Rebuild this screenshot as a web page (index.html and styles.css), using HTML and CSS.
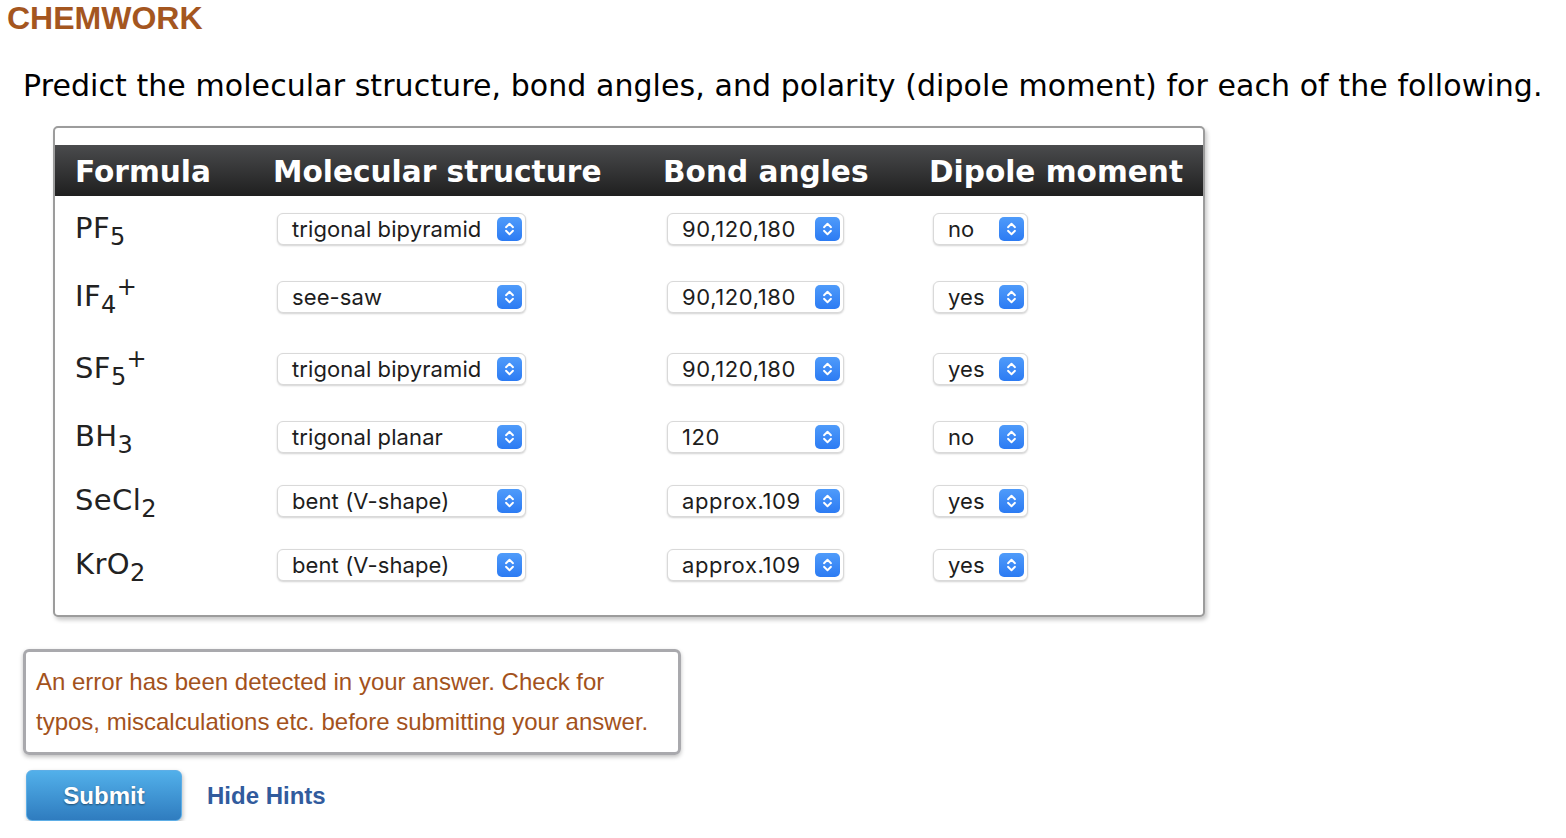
FILE: index.html
```html
<!DOCTYPE html>
<html>
<head>
<meta charset="utf-8">
<title>CHEMWORK</title>
<link rel="stylesheet" href="styles.css">
</head>
<body>
<div class="page">
  <h1 class="brand">CHEMWORK</h1>
  <p class="question">Predict the molecular structure, bond angles, and polarity (dipole moment) for each of the following.</p>

  <div class="panel">
    <div class="grid head">
      <div class="th first">Formula</div>
      <div class="th">Molecular structure</div>
      <div class="th">Bond angles</div>
      <div class="th">Dipole moment</div>
    </div>
    <div class="body">
      <div class="grid row">
        <div class="formula">PF<sub>5</sub></div>
        <div class="cell"><div class="select w-struct"><span class="val">trigonal bipyramid</span><span class="arrows"><svg viewBox="0 0 25 24" width="25" height="24"><path d="M9 10.2 L12.5 6.8 L16 10.2 M9 13.8 L12.5 17.2 L16 13.8"/></svg></span></div></div>
        <div class="cell"><div class="select w-angle"><span class="val num">90,120,180</span><span class="arrows"><svg viewBox="0 0 25 24" width="25" height="24"><path d="M9 10.2 L12.5 6.8 L16 10.2 M9 13.8 L12.5 17.2 L16 13.8"/></svg></span></div></div>
        <div class="cell"><div class="select w-dip"><span class="val">no</span><span class="arrows"><svg viewBox="0 0 25 24" width="25" height="24"><path d="M9 10.2 L12.5 6.8 L16 10.2 M9 13.8 L12.5 17.2 L16 13.8"/></svg></span></div></div>
      </div>
      <div class="grid row tall">
        <div class="formula">IF<sub>4</sub><sup>+</sup></div>
        <div class="cell"><div class="select w-struct"><span class="val">see-saw</span><span class="arrows"><svg viewBox="0 0 25 24" width="25" height="24"><path d="M9 10.2 L12.5 6.8 L16 10.2 M9 13.8 L12.5 17.2 L16 13.8"/></svg></span></div></div>
        <div class="cell"><div class="select w-angle"><span class="val num">90,120,180</span><span class="arrows"><svg viewBox="0 0 25 24" width="25" height="24"><path d="M9 10.2 L12.5 6.8 L16 10.2 M9 13.8 L12.5 17.2 L16 13.8"/></svg></span></div></div>
        <div class="cell"><div class="select w-dip"><span class="val">yes</span><span class="arrows"><svg viewBox="0 0 25 24" width="25" height="24"><path d="M9 10.2 L12.5 6.8 L16 10.2 M9 13.8 L12.5 17.2 L16 13.8"/></svg></span></div></div>
      </div>
      <div class="grid row tall">
        <div class="formula">SF<sub>5</sub><sup>+</sup></div>
        <div class="cell"><div class="select w-struct"><span class="val">trigonal bipyramid</span><span class="arrows"><svg viewBox="0 0 25 24" width="25" height="24"><path d="M9 10.2 L12.5 6.8 L16 10.2 M9 13.8 L12.5 17.2 L16 13.8"/></svg></span></div></div>
        <div class="cell"><div class="select w-angle"><span class="val num">90,120,180</span><span class="arrows"><svg viewBox="0 0 25 24" width="25" height="24"><path d="M9 10.2 L12.5 6.8 L16 10.2 M9 13.8 L12.5 17.2 L16 13.8"/></svg></span></div></div>
        <div class="cell"><div class="select w-dip"><span class="val">yes</span><span class="arrows"><svg viewBox="0 0 25 24" width="25" height="24"><path d="M9 10.2 L12.5 6.8 L16 10.2 M9 13.8 L12.5 17.2 L16 13.8"/></svg></span></div></div>
      </div>
      <div class="grid row">
        <div class="formula">BH<sub>3</sub></div>
        <div class="cell"><div class="select w-struct"><span class="val">trigonal planar</span><span class="arrows"><svg viewBox="0 0 25 24" width="25" height="24"><path d="M9 10.2 L12.5 6.8 L16 10.2 M9 13.8 L12.5 17.2 L16 13.8"/></svg></span></div></div>
        <div class="cell"><div class="select w-angle"><span class="val num">120</span><span class="arrows"><svg viewBox="0 0 25 24" width="25" height="24"><path d="M9 10.2 L12.5 6.8 L16 10.2 M9 13.8 L12.5 17.2 L16 13.8"/></svg></span></div></div>
        <div class="cell"><div class="select w-dip"><span class="val">no</span><span class="arrows"><svg viewBox="0 0 25 24" width="25" height="24"><path d="M9 10.2 L12.5 6.8 L16 10.2 M9 13.8 L12.5 17.2 L16 13.8"/></svg></span></div></div>
      </div>
      <div class="grid row">
        <div class="formula">SeCl<sub>2</sub></div>
        <div class="cell"><div class="select w-struct"><span class="val">bent (V-shape)</span><span class="arrows"><svg viewBox="0 0 25 24" width="25" height="24"><path d="M9 10.2 L12.5 6.8 L16 10.2 M9 13.8 L12.5 17.2 L16 13.8"/></svg></span></div></div>
        <div class="cell"><div class="select w-angle"><span class="val num">approx.109</span><span class="arrows"><svg viewBox="0 0 25 24" width="25" height="24"><path d="M9 10.2 L12.5 6.8 L16 10.2 M9 13.8 L12.5 17.2 L16 13.8"/></svg></span></div></div>
        <div class="cell"><div class="select w-dip"><span class="val">yes</span><span class="arrows"><svg viewBox="0 0 25 24" width="25" height="24"><path d="M9 10.2 L12.5 6.8 L16 10.2 M9 13.8 L12.5 17.2 L16 13.8"/></svg></span></div></div>
      </div>
      <div class="grid row">
        <div class="formula">KrO<sub>2</sub></div>
        <div class="cell"><div class="select w-struct"><span class="val">bent (V-shape)</span><span class="arrows"><svg viewBox="0 0 25 24" width="25" height="24"><path d="M9 10.2 L12.5 6.8 L16 10.2 M9 13.8 L12.5 17.2 L16 13.8"/></svg></span></div></div>
        <div class="cell"><div class="select w-angle"><span class="val num">approx.109</span><span class="arrows"><svg viewBox="0 0 25 24" width="25" height="24"><path d="M9 10.2 L12.5 6.8 L16 10.2 M9 13.8 L12.5 17.2 L16 13.8"/></svg></span></div></div>
        <div class="cell"><div class="select w-dip"><span class="val">yes</span><span class="arrows"><svg viewBox="0 0 25 24" width="25" height="24"><path d="M9 10.2 L12.5 6.8 L16 10.2 M9 13.8 L12.5 17.2 L16 13.8"/></svg></span></div></div>
      </div>
    </div>
  </div>

  <div class="error">An error has been detected in your answer. Check for typos, miscalculations etc. before submitting your answer.</div>

  <div class="actions">
    <button class="submit" type="button">Submit</button>
    <a class="hints" href="#">Hide Hints</a>
  </div>
</div>
</body>
</html>
```

FILE: styles.css
```css
html, body {
  margin: 0;
  padding: 0;
  background: #ffffff;
}

.page {
  font-family: "DejaVu Sans", Verdana, sans-serif;
  color: #000;
}

.brand {
  margin: 0;
  padding-left: 7px;
  font-family: "Liberation Sans", Arial, sans-serif;
  font-weight: bold;
  font-size: 32px;
  line-height: 36px;
  color: #a4561f;
}

.question {
  margin: 32px 0 0 23px;
  font-size: 30px;
  letter-spacing: 0.07px;
  line-height: 36px;
  color: #000;
  white-space: nowrap;
}

.panel {
  margin: 22px 0 0 53px;
  width: 1148px;
  border: 2px solid #9c9c9c;
  border-radius: 5px;
  padding: 17px 0 18px 0;
  box-shadow: 2px 3px 4px rgba(0, 0, 0, 0.22);
  background: #fff;
}

.grid {
  display: grid;
  grid-template-columns: 200px 390px 266px 1fr;
}

.head {
  height: 51px;
  background: linear-gradient(#4a4b4d, #1f1f1f);
  align-items: center;
}

.th {
  padding-left: 18px;
  padding-top: 3px;
  font-weight: bold;
  font-size: 29.6px;
  line-height: 48px;
  color: #fff;
  white-space: nowrap;
}

.th.first {
  padding-left: 20px;
}

.body {
  padding-top: 1px;
}

.row {
  height: 64px;
  align-items: center;
}

.row.tall {
  height: 72px;
}

.formula {
  padding-left: 20px;
  padding-bottom: 2px;
  font-size: 29px;
  letter-spacing: 0.4px;
  line-height: 32px;
  color: #222;
  white-space: nowrap;
}

.formula sub,
.formula sup {
  line-height: 0;
  font-size: 24px;
}

.cell {
  padding-left: 22px;
  display: flex;
  align-items: center;
}

.select {
  box-sizing: border-box;
  height: 32px;
  display: flex;
  align-items: center;
  justify-content: space-between;
  padding: 0 3px 0 14px;
  border: 1px solid #d9d9d9;
  border-radius: 6px;
  background: #fff;
  box-shadow: 0 1px 2px rgba(0, 0, 0, 0.18);
  font-family: "Inter", "Liberation Sans", sans-serif;
  font-size: 22px;
  letter-spacing: 0.1px;
  color: #1d1d1d;
  white-space: nowrap;
}

.val.num {
  letter-spacing: 0.6px;
}

.w-struct { width: 249px; }
.w-angle { width: 177px; }
.w-dip { width: 95px; }

.arrows {
  display: block;
  width: 25px;
  height: 24px;
  border-radius: 5px;
  background: linear-gradient(#4f9bfa, #2c7bf3);
}

.arrows svg {
  display: block;
}

.arrows path {
  fill: none;
  stroke: #fff;
  stroke-width: 1.9;
  stroke-linecap: round;
  stroke-linejoin: round;
}

.error {
  box-sizing: border-box;
  margin: 32px 0 0 23px;
  width: 658px;
  border: 3px solid #a9a9ad;
  border-radius: 6px;
  padding: 10px 14px 10px 10px;
  box-shadow: 0 2px 4px rgba(0, 0, 0, 0.25);
  font-family: "Liberation Sans", Arial, sans-serif;
  font-size: 24px;
  line-height: 40px;
  color: #a3521c;
}

.actions {
  margin: 15px 0 0 26px;
  display: flex;
  align-items: center;
  gap: 25px;
}

.submit {
  box-sizing: border-box;
  width: 156px;
  height: 51px;
  border: 1px solid #5eaee6;
  border-radius: 6px;
  background: linear-gradient(#52b0ea, #2f7cbf);
  box-shadow: 1px 2px 4px rgba(0, 0, 0, 0.25);
  font-family: "Liberation Sans", Arial, sans-serif;
  font-weight: bold;
  font-size: 24px;
  color: #fff;
  text-shadow: 0 1px 2px rgba(0, 0, 0, 0.45);
  padding: 0;
}

.hints {
  font-family: "Liberation Sans", Arial, sans-serif;
  font-weight: bold;
  font-size: 24px;
  color: #315b9d;
  text-decoration: none;
}
```
